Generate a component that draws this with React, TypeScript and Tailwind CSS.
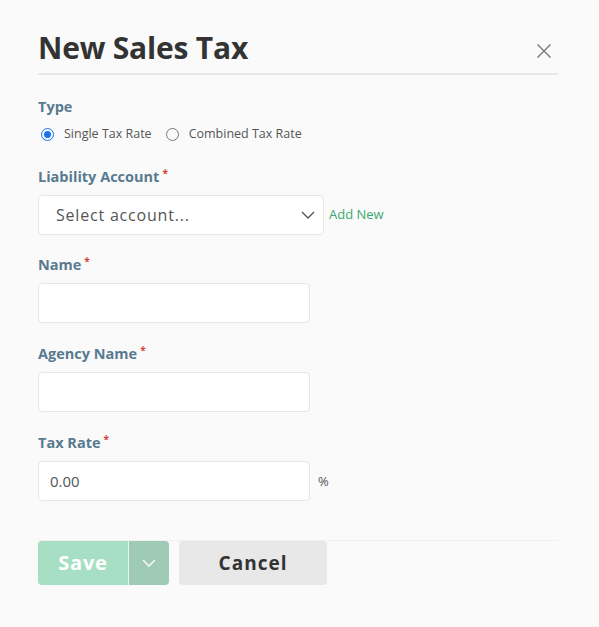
import React from "react";

const font = { fontFamily: '"Open Sans", "Liberation Sans", sans-serif' };

function Label({ children }: { children: React.ReactNode }) {
  return (
    <div className="flex items-start h-[20px] text-[14.5px] font-bold leading-[20px] text-[#587a90]">
      <span>{children}</span>
      <span className="ml-[3px] text-[10px] leading-[12px] text-[#d0453a]">*</span>
    </div>
  );
}

function Input({ value }: { value?: string }) {
  return (
    <div className="w-[272px] h-[40px] rounded-[4px] border border-[#e6e6e6] bg-white flex items-center pl-[11px] text-[15px] text-[#555]">
      {value}
    </div>
  );
}

export default function App() {
  return (
    <div className="w-[599px] h-[627px] bg-[#fafafa]" style={font}>
      <div className="pl-[38px] w-[558px] pt-[27px]">
        <div className="flex items-center justify-between h-[42px]">
          <h1 className="text-[30px] font-bold text-[#333] leading-[42px] tracking-[-0.2px]">New Sales Tax</h1>
          <svg width="16" height="16" viewBox="0 0 16 16" className="mr-[6px] mt-[6px]">
            <path d="M1.5 1.5 L14.5 14.5 M14.5 1.5 L1.5 14.5" stroke="#777" strokeWidth="1.4" fill="none" />
          </svg>
        </div>
        <div className="mt-[4px] h-[2px] bg-[#e8e8e8]" />

        <div className="mt-[22px] text-[14.5px] font-bold leading-[20px] text-[#587a90]">Type</div>
        <div className="mt-[8px] flex items-center h-[18px] text-[12.5px] text-[#555]">
          <span className="w-[13px] h-[13px] rounded-full border-[1.5px] border-[#1a73e8] flex items-center justify-center ml-[3px]">
            <span className="w-[7px] h-[7px] rounded-full bg-[#1a73e8]" />
          </span>
          <span className="ml-[10px]">Single Tax Rate</span>
          <span className="ml-[14px] w-[13px] h-[13px] rounded-full border border-[#777]" />
          <span className="ml-[10px]">Combined Tax Rate</span>
        </div>

        <div className="mt-[24px]">
          <Label>Liability Account</Label>
        </div>
        <div className="mt-[8px] flex items-center">
          <div className="w-[286px] h-[40px] rounded-[4px] border border-[#e6e6e6] bg-white flex items-center justify-between pl-[17px] pr-[8px]">
            <span className="text-[16px] text-[#555] tracking-[0.8px]">Select account...</span>
            <svg width="14" height="8" viewBox="0 0 14 8">
              <path d="M1 1 L7 7 L13 1" stroke="#555" strokeWidth="1.4" fill="none" />
            </svg>
          </div>
          <span className="ml-[5px] text-[13px] text-[#3aa874]">Add New</span>
        </div>

        <div className="mt-[20px]">
          <Label>Name</Label>
        </div>
        <div className="mt-[8px]">
          <Input />
        </div>

        <div className="mt-[21px]">
          <Label>Agency Name</Label>
        </div>
        <div className="mt-[8px]">
          <Input />
        </div>

        <div className="mt-[21px]">
          <Label>Tax Rate</Label>
        </div>
        <div className="mt-[8px] flex items-center">
          <Input value="0.00" />
          <span className="ml-[8px] mt-[2px] text-[13px] text-[#555]">%</span>
        </div>

        <div className="mt-[39px] border-t border-[#f0f0f0] h-[44px] flex relative">
          <div className="absolute top-0 left-0 flex">
            <div className="flex h-[44px] rounded-[4px] overflow-hidden">
              <div className="w-[90px] bg-[#a7dfc4] flex items-center justify-center text-[20px] font-bold text-white tracking-[0.8px]">Save</div>
              <div className="w-px bg-[#e6f5ee]" />
              <div className="w-[40px] bg-[#9fcab5] flex items-center justify-center">
                <svg width="14" height="8" viewBox="0 0 14 8">
                  <path d="M1 1 L7 7 L13 1" stroke="#fff" strokeWidth="1.3" fill="none" />
                </svg>
              </div>
            </div>
            <div className="ml-[10px] w-[148px] h-[44px] rounded-[4px] bg-[#e8e8e8] flex items-center justify-center text-[19px] font-bold text-[#333] tracking-[1px]">Cancel</div>
          </div>
        </div>
      </div>
    </div>
  );
}
